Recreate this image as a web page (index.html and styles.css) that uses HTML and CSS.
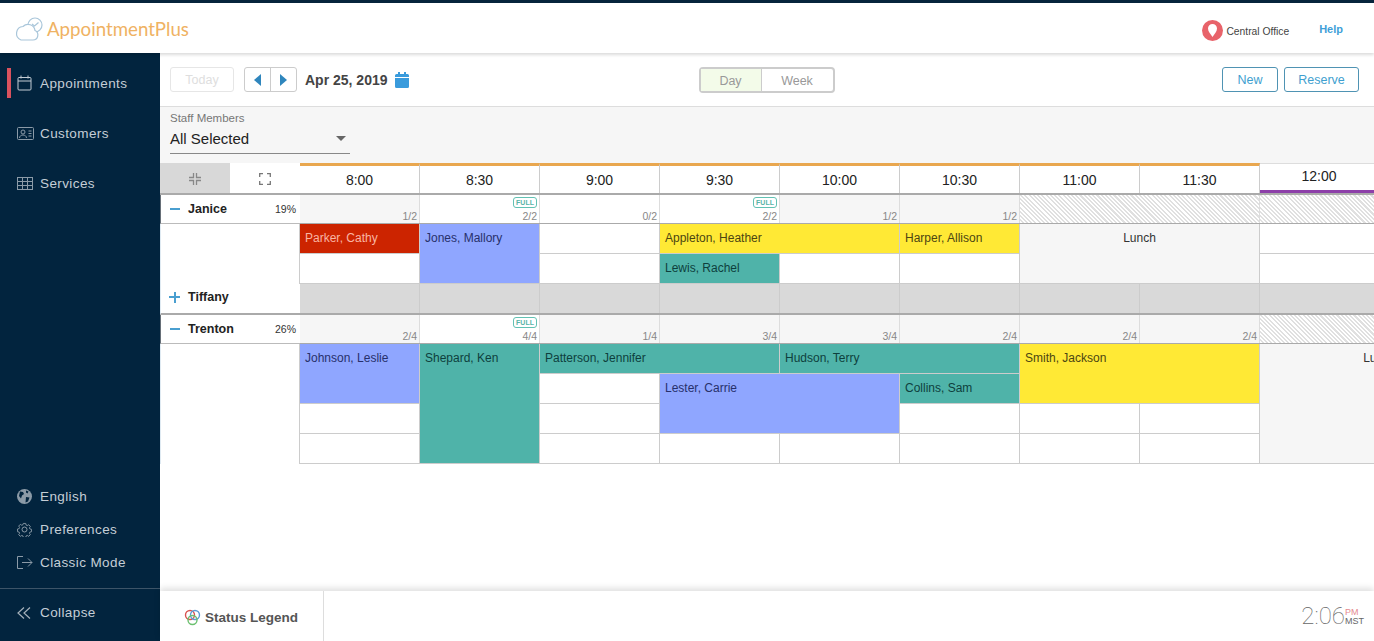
FILE: index.html
```html
<!DOCTYPE html>
<html>
<head>
	<meta charset="UTF-8">
	<title>AppointmentPlus</title>
	<link rel="stylesheet" href="styles.css">
</head>
<body>

<header class="topbar">
	<div class="logo">
		<svg class="logo-icon" width="30" height="26" viewBox="0 0 30 26" fill="none" stroke="#a9c6da" stroke-width="1.2">
			<circle cx="21" cy="9" r="7" fill="#fff"/>
			<path d="M7 24h12a5 5 0 0 0 2-9.500 7 7 0 0 0-12-4 7 7 0 0 0-2 13.500z" fill="#fff"/>
			<path d="M18 8l2.500 2 4-3.500" stroke-width="1.200"/>
		</svg>
		<span class="logo-text">AppointmentPlus</span>
	</div>
	<div class="office">
		<svg width="21" height="21" viewBox="0 0 21 21">
			<circle cx="10.500" cy="10.500" r="10.500" fill="#e8636a"/>
			<path d="M10.500 17c-2-3-4.500-5.500-4.500-8.500a4.500 4.500 0 0 1 9 0c0 3-2.500 5.500-4.500 8.500z" fill="#fff"/>
		</svg>
		<span>Central Office</span>
	</div>
	<a class="help">Help</a>
</header>

<div class="app">
	<nav class="sidebar">
		<a class="nav-item active">
			<svg width="15" height="16" viewBox="0 0 15 16" fill="none" stroke="#c3ccd4"><rect x="1" y="2.500" width="13" height="12.500" rx="1"/><path d="M1 6h13M4 .5v3M11 .5v3"/></svg>
			<span>Appointments</span>
		</a>
		<a class="nav-item">
			<svg width="17" height="13" viewBox="0 0 17 13" fill="none" stroke="#8b9aa7"><rect x=".5" y=".5" width="16" height="12" rx="1"/><circle cx="6" cy="5" r="2"/><path d="M2.500 11c0-4 7-4 7 0M11.500 4h3M11.500 6.500h3M11.500 9h3"/></svg>
			<span>Customers</span>
		</a>
		<a class="nav-item">
			<svg width="16" height="13" viewBox="0 0 16 13" fill="none" stroke="#8b9aa7"><rect x=".5" y=".5" width="15" height="12"/><path d="M.5 4.500h15M.5 8.500h15M5.500.5v12M10.500.5v12"/></svg>
			<span>Services</span>
		</a>

		<div class="nav-bottom">
			<a class="nav-item small">
				<svg width="15" height="15" viewBox="0 0 15 15"><circle cx="7.500" cy="7.500" r="7.500" fill="#8b9aa7"/><path d="M3 2.500l3 .5 1 2-2 1.500-1 3-2-2.500zM9 1.500l2.500 1-1 2-1.500-1zM9 8l3.500.5-1.500 4-2.500 1z" fill="#02243e"/></svg>
				<span>English</span>
			</a>
			<a class="nav-item small">
				<svg width="15" height="15" viewBox="0 0 15 15" fill="none" stroke="#8b9aa7"><circle cx="7.500" cy="7.500" r="2.500"/><path d="M6.200 .8h2.600l.4 1.800 1.300.6 1.600-1 1.800 1.900-1 1.500.5 1.300 1.800.4v2.600l-1.800.4-.5 1.300 1 1.500-1.800 1.900-1.600-1-1.300.6-.4 1.800H6.200l-.4-1.800-1.300-.6-1.600 1-1.800-1.900 1-1.500-.5-1.300-1.800-.4V6.900l1.800-.4.5-1.300-1-1.500 1.800-1.900 1.600 1 1.300-.6z" transform="translate(.7 .7) scale(.91)"/></svg>
				<span>Preferences</span>
			</a>
			<a class="nav-item small">
				<svg width="16" height="13" viewBox="0 0 16 13" fill="none" stroke="#8b9aa7"><path d="M6 .5H.5v12H6M5 6.500h10M11 2.500l4 4-4 4"/></svg>
				<span>Classic Mode</span>
			</a>
			<a class="nav-item collapse">
				<svg width="14" height="12" viewBox="0 0 14 12" fill="none" stroke="#a5b1bb" stroke-width="1.200"><path d="M7 .5L1 6l6 5.500M13 .5L7 6l6 5.500"/></svg>
				<span>Collapse</span>
			</a>
		</div>
	</nav>

	<main class="content">
		<div class="toolbar">
			<div class="tool-left">
				<button class="btn today">Today</button>
				<div class="pager">
					<span class="page-btn"><i class="arrow left"></i></span>
					<span class="page-btn"><i class="arrow right"></i></span>
				</div>
				<span class="date">Apr 25, 2019</span>
				<svg width="14" height="16" viewBox="0 0 14 16"><path d="M0 6h14v8.500a1.500 1.500 0 0 1-1.500 1.500h-11A1.500 1.500 0 0 1 0 14.500zM1.500 2H3V0h2v2h4V0h2v2h1.500A1.500 1.500 0 0 1 14 3.500V5H0V3.500A1.500 1.500 0 0 1 1.500 2z" fill="#3a9bdc"/></svg>
			</div>
			<div class="view-switch">
				<span class="view on">Day</span>
				<span class="view">Week</span>
			</div>
			<div class="tool-right">
				<button class="btn outline new">New</button>
				<button class="btn outline reserve">Reserve</button>
			</div>
		</div>

		<div class="filters">
			<label>Staff Members</label>
			<div class="select">All Selected<i class="caret"></i></div>
		</div>

		<div class="schedule">
			<div class="row time-row">
				<div class="side tools">
					<span class="tool on">
						<svg width="12" height="12" viewBox="0 0 12 12" fill="none" stroke="#888" stroke-width="1.300"><path d="M4.500 0v4.500H0M7.500 0v4.500H12M4.500 12V7.500H0M7.500 12V7.500H12"/></svg>
					</span>
					<span class="tool">
						<svg width="12" height="12" viewBox="0 0 12 12" fill="none" stroke="#777" stroke-width="1.300"><path d="M.7 4V.7H4M8 .7h3.300V4M.7 8v3.300H4M8 11.300h3.300V8"/></svg>
					</span>
				</div>
				<div class="times">
					<div class="time">8:00</div>
					<div class="time">8:30</div>
					<div class="time">9:00</div>
					<div class="time">9:30</div>
					<div class="time">10:00</div>
					<div class="time">10:30</div>
					<div class="time">11:00</div>
					<div class="time">11:30</div>
					<div class="time now">12:00</div>
				</div>
			</div>

			<!-- janice -->
			<div class="row count-row">
				<div class="side staff open"><i class="minus"></i><b>Janice</b><span class="pct">19%</span></div>
				<div class="grid">
					<div class="count busy">1/2</div>
					<div class="count"><em class="full">FULL</em>2/2</div>
					<div class="count">0/2</div>
					<div class="count"><em class="full">FULL</em>2/2</div>
					<div class="count busy">1/2</div>
					<div class="count busy">1/2</div>
					<div class="count off w2"></div>
					<div class="count off w2"></div>
				</div>
			</div>
			<div class="row">
				<div class="side"></div>
				<div class="grid slots">
					<div class="appt red">Parker, Cathy</div>
					<div class="appt blue h2">Jones, Mallory</div>
					<div class="cell"></div>
					<div class="appt yellow w2">Appleton, Heather</div>
					<div class="appt yellow">Harper, Allison</div>
					<div class="appt lunch w2 h2">Lunch</div>
					<div class="cell w2"></div>

					<div class="cell"></div>
					<div class="cell"></div>
					<div class="appt teal">Lewis, Rachel</div>
					<div class="cell"></div>
					<div class="cell"></div>
					<div class="cell w2"></div>
				</div>
			</div>

			<!-- tiffany -->
			<div class="row closed-row">
				<div class="side staff"><i class="plus"></i><b>Tiffany</b></div>
				<div class="grid">
					<div class="shut"></div>
					<div class="shut"></div>
					<div class="shut"></div>
					<div class="shut"></div>
					<div class="shut"></div>
					<div class="shut"></div>
					<div class="shut"></div>
					<div class="shut"></div>
					<div class="shut w2"></div>
				</div>
			</div>

			<!-- trenton -->
			<div class="row count-row">
				<div class="side staff open"><i class="minus"></i><b>Trenton</b><span class="pct">26%</span></div>
				<div class="grid">
					<div class="count busy">2/4</div>
					<div class="count"><em class="full">FULL</em>4/4</div>
					<div class="count busy">1/4</div>
					<div class="count busy">3/4</div>
					<div class="count busy">3/4</div>
					<div class="count busy">2/4</div>
					<div class="count busy">2/4</div>
					<div class="count busy">2/4</div>
					<div class="count off w2"></div>
				</div>
			</div>
			<div class="row">
				<div class="side"></div>
				<div class="grid slots">
					<div class="appt blue h2">Johnson, Leslie</div>
					<div class="appt teal h4">Shepard, Ken</div>
					<div class="appt teal w2">Patterson, Jennifer</div>
					<div class="appt teal w2">Hudson, Terry</div>
					<div class="appt yellow w2 h2">Smith, Jackson</div>
					<div class="appt lunch w2 h4">Lunch</div>

					<div class="cell"></div>
					<div class="appt blue w2 h2">Lester, Carrie</div>
					<div class="appt teal">Collins, Sam</div>

					<div class="cell"></div>
					<div class="cell"></div>
					<div class="cell"></div>
					<div class="cell"></div>
					<div class="cell"></div>

					<div class="cell"></div>
					<div class="cell"></div>
					<div class="cell"></div>
					<div class="cell"></div>
					<div class="cell"></div>
					<div class="cell"></div>
					<div class="cell"></div>
				</div>
			</div>
		</div>

		<footer class="footer">
			<div class="legend">
				<svg width="17" height="17" viewBox="0 0 17 17" fill="none" stroke-width="1.400">
					<circle cx="6" cy="6" r="4.500" stroke="#d9534f"/>
					<circle cx="11" cy="6" r="4.500" stroke="#5b9bd5"/>
					<circle cx="8.500" cy="11" r="4.500" stroke="#6cc070"/>
				</svg>
				<span>Status Legend</span>
			</div>
			<div class="clock">
				<span class="clock-time">2:06</span>
				<span class="clock-side"><span class="pm">PM</span><span>MST</span></span>
			</div>
		</footer>
	</main>
</div>

</body>
</html>
```

FILE: styles.css
```css
* {
	box-sizing: border-box;
}

html, body {
	height: 100%;
}

body {
	margin: 0;
	display: flex;
	flex-direction: column;
	overflow: hidden;
	font-family: "Liberation Sans", Arial, sans-serif;
	color: #222;
	background: #fff;
}

/* top bar */
.topbar {
	height: 53px;
	flex: none;
	display: flex;
	align-items: center;
	padding-right: 31px;
	border-top: 3px solid #06243c;
	background: #fff;
	position: relative;
	z-index: 2;
	box-shadow: 0 2px 3px rgba(0, 0, 0, .14);
}

.logo {
	display: flex;
	align-items: center;
	margin-left: 14px;
	margin-top: 2px;
	flex: 1;
}

.logo-text {
	margin-left: 3px;
	font-family: "Lato", sans-serif;
	font-size: 18.700px;
	color: #efb263;
}

.office {
	display: flex;
	align-items: center;
	gap: 3px;
	margin-top: 4px;
	font-size: 10.300px;
	color: #444;
}

.office span {
	margin-top: 2px;
}

.help {
	margin-left: 30px;
	margin-top: 2px;
	font-size: 11px;
	font-weight: bold;
	color: #3f9fd8;
}

/* sidebar */
.app {
	flex: 1;
	display: flex;
	min-height: 0;
}

.sidebar {
	width: 160px;
	flex: none;
	display: flex;
	flex-direction: column;
	padding-top: 5px;
	background: #02243e;
	color: #c5ced6;
	font-size: 13.500px;
	letter-spacing: .4px;
}

.nav-item {
	height: 50px;
	display: flex;
	align-items: center;
	position: relative;
	padding-left: 17px;
}

.nav-item svg {
	flex: none;
}

.nav-item span {
	position: absolute;
	left: 40px;
}

.nav-item.active::before {
	content: "";
	position: absolute;
	left: 7px;
	top: 10px;
	width: 4px;
	height: 30px;
	background: #d9525e;
}

.nav-item.small {
	height: 33px;
}

.nav-item.collapse {
	height: 50px;
	margin-top: 9px;
	padding-bottom: 2px;
	border-top: 1px solid #3d5468;
}

.nav-bottom {
	margin-top: auto;
	padding-bottom: 3px;
}

/* toolbar */
.content {
	flex: 1;
	min-width: 0;
	display: flex;
	flex-direction: column;
}

.toolbar {
	height: 54px;
	flex: none;
	display: flex;
	align-items: center;
	padding: 0 15px 0 10px;
	border-bottom: 1px solid #ddd;
}

.tool-left,
.tool-right {
	flex: 1;
	display: flex;
	align-items: center;
}

.tool-right {
	justify-content: flex-end;
	gap: 6px;
}

.btn {
	height: 25px;
	padding: 0;
	border-radius: 3px;
	background: #fff;
	font-family: inherit;
	font-size: 12.500px;
}

.today {
	width: 64px;
	border: 1px solid #e6e6e6;
	color: #dedede;
}

.outline {
	border: 1px solid #4f93b3;
	color: #3f9fcf;
}

.new {
	width: 56px;
}

.reserve {
	width: 75px;
}

.pager {
	display: flex;
	height: 25px;
	width: 53px;
	margin-left: 10px;
	border: 1px solid #ccc;
	border-radius: 3px;
}

.page-btn {
	flex: 1;
	display: flex;
	align-items: center;
	justify-content: center;
}

.page-btn + .page-btn {
	border-left: 1px solid #ccc;
}

.arrow {
	width: 0;
	height: 0;
	border-top: 6px solid transparent;
	border-bottom: 6px solid transparent;
}

.arrow.left {
	border-right: 7px solid #2f86bd;
}

.arrow.right {
	border-left: 7px solid #2f86bd;
}

.date {
	margin: 0 7px 0 8px;
	font-size: 14px;
	font-weight: bold;
	color: #444;
}

.view-switch {
	display: flex;
	width: 136px;
	height: 26px;
	margin-left: 4px;
	border: 2px solid #ccc;
	border-radius: 4px;
	font-size: 12.500px;
	color: #999;
}

.view {
	flex: 1;
	display: flex;
	align-items: center;
	justify-content: center;
	padding-top: 2px;
}

.view.on {
	flex: none;
	width: 61px;
	border-right: 1px solid #ccc;
	background: #f3fbe9;
}

/* staff filter */
.filters {
	height: 56px;
	flex: none;
	padding: 4px 10px 0;
	background: #f6f6f6;
}

.filters label {
	display: block;
	font-size: 11.500px;
	color: #777;
	line-height: 14px;
}

.select {
	position: relative;
	width: 180px;
	height: 29px;
	padding-top: 5px;
	border-bottom: 1px solid #888;
	font-size: 15px;
	line-height: 18px;
	color: #222;
}

.caret {
	position: absolute;
	right: 4px;
	top: 11px;
	border-top: 5px solid #666;
	border-left: 5.500px solid transparent;
	border-right: 5.500px solid transparent;
}

/* schedule */
.schedule {
	flex: 1;
	min-height: 0;
	overflow: hidden;
}

.row {
	display: flex;
	width: 1540px;
}

.side {
	width: 140px;
	flex: none;
	background: #fff;
	border-left: 1px solid #dfeaf2;
}

.time-row {
	height: 32px;
	border-bottom: 2px solid #aaa;
}

.tools {
	display: flex;
	border-left: 0;
}

.tool {
	width: 70px;
	display: flex;
	align-items: center;
	justify-content: center;
	padding-top: 2px;
}

.tool.on {
	background: #d8d8d8;
}

.times {
	display: flex;
}

.time {
	width: 120px;
	padding-top: 2px;
	border-top: 3px solid #e9a74f;
	border-right: 1px solid #ccc;
	text-align: center;
	font-size: 14px;
	line-height: 24px;
	color: #222;
}

.time.now {
	padding-top: 0;
	border-top: 1px solid #ddd;
	border-right: 0;
	border-bottom: 3px solid #8d3fa9;
	width: 280px;
	padding-right: 162px;
}

.staff {
	display: flex;
	align-items: center;
	padding-left: 9px;
	font-size: 12.500px;
	position: relative;
}

.staff.open {
	border-left: 1px solid #666f78;
	border-bottom: 1px solid #bbb;
}

.staff b {
	margin-left: 8px;
	color: #222;
}

.pct {
	position: absolute;
	right: 4px;
	font-size: 10.500px;
	color: #333;
}

.minus,
.plus {
	position: relative;
	display: block;
	width: 10px;
	height: 2px;
	background: #4a9fd0;
}

.plus {
	width: 11px;
	margin-left: -1px;
}

.plus::after {
	content: "";
	position: absolute;
	left: 4.500px;
	top: -4.500px;
	width: 2px;
	height: 11px;
	background: #4a9fd0;
}

.grid {
	display: grid;
	grid-template-columns: repeat(10, 120px);
	grid-auto-rows: 30px;
	border-left: 1px solid #ccc;
	margin-left: -1px;
}

.count-row {
	height: 29px;
}

.count-row .grid {
	grid-auto-rows: 28px;
	border-bottom: 1px solid #aaa;
}

.count {
	position: relative;
	height: 28px;
	padding: 14px 2px 0 0;
	border-right: 1px solid #ddd;
	text-align: right;
	font-size: 10.500px;
	line-height: 14px;
	color: #888;
	background: #fff;
}

.count.busy {
	background: #f6f6f6;
}

.count.off {
	background: repeating-linear-gradient(45deg, #fff 0, #fff 1.500px, #e0e0e0 1.500px, #e0e0e0 3px);
}

.full {
	position: absolute;
	right: 2px;
	top: 2px;
	width: 24px;
	height: 11px;
	border: 1px solid #62c1b3;
	border-radius: 3px;
	text-align: center;
	font-style: normal;
	font-weight: bold;
	font-size: 7px;
	line-height: 9px;
	color: #58b4a7;
}

.closed-row {
	height: 31px;
}

.closed-row .grid {
	grid-auto-rows: 29px;
	height: 31px;
	border-bottom: 2px solid #aaa;
}

.closed-row .side {
	padding-bottom: 3px;
	border-bottom: 2px solid #aaa;
}

.shut {
	border-right: 1px solid #ccc;
	background: #d9d9d9;
}

.cell {
	border-right: 1px solid #ccc;
	border-bottom: 1px solid #ccc;
}

.w2 {
	grid-column: span 2;
}

.h2 {
	grid-row: span 2;
}

.h4 {
	grid-row: span 4;
}

.appt {
	padding: 5px 5px 0;
	border-right: 1px solid #ccc;
	border-bottom: 1px solid #ccc;
	font-size: 12px;
	line-height: 18px;
}

.red {
	background: #cc2400;
	color: #f9b5a4;
}

.blue {
	background: #8fa6ff;
	color: #27306b;
}

.yellow {
	background: #ffe935;
	color: #4c4512;
}

.teal {
	background: #4fb3a9;
	color: #0e3f3d;
}

.lunch {
	background: #f6f6f6;
	color: #333;
	text-align: center;
}

/* footer */
.footer {
	height: 50px;
	flex: none;
	display: flex;
	align-items: center;
	justify-content: space-between;
	position: relative;
	background: #fff;
	box-shadow: 0 -3px 6px rgba(0, 0, 0, .12);
}

.legend {
	width: 164px;
	height: 100%;
	display: flex;
	align-items: center;
	gap: 4px;
	padding-left: 24px;
	padding-top: 2px;
	border-right: 1px solid #ddd;
	font-size: 13.500px;
	font-weight: bold;
	color: #555;
}

.clock {
	display: flex;
	align-items: center;
	padding-right: 10px;
	color: #666;
}

.clock-time {
	font-family: "Roboto", sans-serif;
	font-weight: 100;
	font-size: 24px;
}

.clock-side {
	display: flex;
	flex-direction: column;
	font-size: 9px;
	line-height: 9px;
	margin-top: 1px;
}

.pm {
	color: #e58a8f;
}
```
